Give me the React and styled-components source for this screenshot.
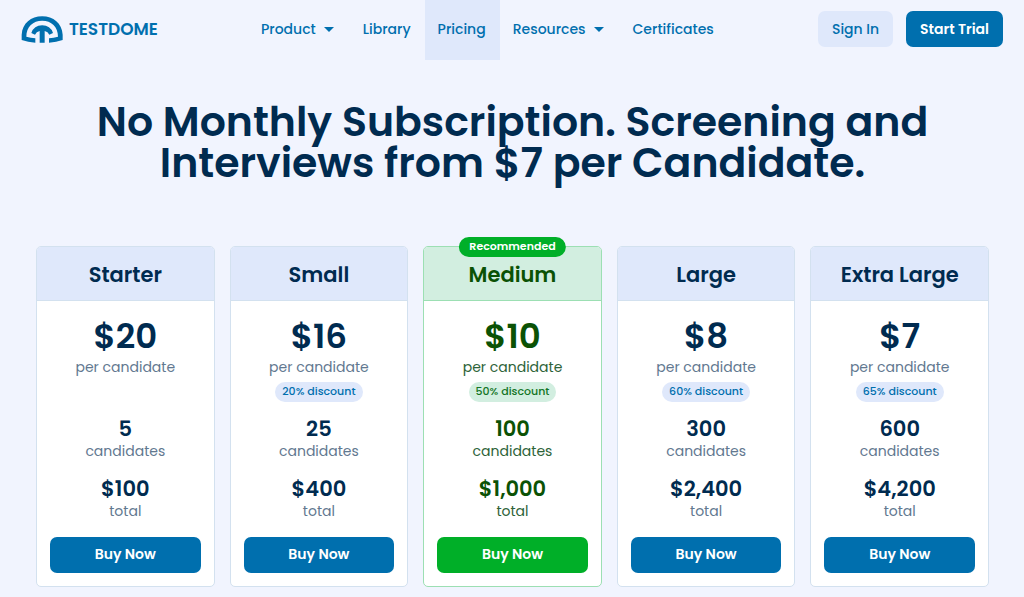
import React from 'react'
import styled, { createGlobalStyle, css } from 'styled-components'

const GlobalStyle = createGlobalStyle`
  * {
    box-sizing: border-box;
  }
  body {
    margin: 0;
    background: #f1f4fe;
    color: #002b50;
    font-family: Poppins, Inter, sans-serif;
    font-size: 14px;
  }
`

const Header = styled.header`
  display: flex;
  align-items: center;
  justify-content: space-between;
  height: 60px;
  padding: 0 21px;
`

const Brand = styled.a`
  display: flex;
  align-items: center;
  gap: 6px;
  padding-bottom: 2px;
  color: #006fae;
  font-size: 17px;
  font-weight: 600;
  text-decoration: none;
`

const Nav = styled.nav`
  display: flex;
`

const NavLink = styled.a`
  display: flex;
  align-items: center;
  gap: 8px;
  height: 60px;
  padding: 0 14px 2px 13px;
  color: #006fae;
  background: ${props => (props.$active ? '#dfe8fb' : 'transparent')};
  font-weight: 500;
  text-decoration: none;
`

const Caret = styled.span`
  margin-right: 2px;
  border: 5px solid transparent;
  border-top-color: currentColor;
  border-bottom: none;
`

const Actions = styled.div`
  display: flex;
  gap: 13px;
  padding-bottom: 2px;
`

const Button = styled.button`
  height: 36px;
  padding: 0 14px;
  border: none;
  border-radius: 7px;
  background: #006fae;
  color: #fff;
  font-family: inherit;
  font-size: 14px;
  font-weight: 600;
  cursor: pointer;
`

const SignIn = styled(Button)`
  background: #dfe8fb;
  color: #006fae;
  font-weight: 500;
`

const BuyButton = styled(Button)`
  width: 100%;
  margin-top: 17px;
  padding-bottom: 2px;
  ${props => props.$featured && css`
    background: #00af28;
  `}
`

const Main = styled.main`
  padding: 41px 35px 10px 36px;
`

const Title = styled.h1`
  max-width: 880px;
  margin: 0 auto 63px;
  font-size: 41px;
  font-weight: 600;
  line-height: 41px;
  text-align: center;
`

const Plans = styled.div`
  display: grid;
  grid-template-columns: repeat(5, 1fr);
  gap: 15px;
`

const Card = styled.article`
  position: relative;
  border: 1px solid ${props => (props.$featured ? '#9cdfb3' : '#d3e1ef')};
  border-radius: 5px;
  background: #fff;
  color: ${props => (props.$featured ? '#0b5205' : '#002b50')};
  text-align: center;
`

const Ribbon = styled.span`
  position: absolute;
  top: -10px;
  left: 50%;
  transform: translateX(-50%);
  padding: 0 10px 2px;
  border-radius: 10px;
  background: #00af28;
  color: #fff;
  font-size: 11px;
  font-weight: 600;
  line-height: 18px;
`

const CardName = styled.h2`
  margin: 0;
  padding-top: 2px;
  border-bottom: 1px solid ${props => (props.$featured ? '#9cdfb3' : '#d3e1ef')};
  border-radius: 4px 4px 0 0;
  background: ${props => (props.$featured ? '#d2eee0' : '#dfe8fb')};
  font-size: 21px;
  font-weight: 600;
  line-height: 51px;
`

const CardBody = styled.div`
  padding: 13px;
`

const Price = styled.div`
  font-size: 34px;
  font-weight: 600;
  line-height: 44px;
`

const Label = styled.div`
  color: ${props => (props.$featured ? '#2d6338' : '#627890')};
  font-size: 14px;
  line-height: 18px;
`

const DiscountRow = styled.div`
  display: flex;
  justify-content: center;
  height: 20px;
  margin: 6px 0 14px;
`

const Discount = styled.span`
  padding: 0 7px 2px;
  border-radius: 10px;
  background: ${props => (props.$featured ? '#d2eee0' : '#dfe8fb')};
  color: ${props => (props.$featured ? '#137525' : '#006fae')};
  font-size: 11px;
  font-weight: 500;
  line-height: 18px;
`

const Amount = styled.div`
  font-size: 21px;
  font-weight: 600;
  line-height: 26px;
`

const Total = styled(Amount)`
  margin-top: 16px;
`

const plans = [
  { name: 'Starter', price: '$20', count: '5', total: '$100' },
  { name: 'Small', price: '$16', discount: '20%', count: '25', total: '$400' },
  { name: 'Medium', price: '$10', discount: '50%', count: '100', total: '$1,000', featured: true },
  { name: 'Large', price: '$8', discount: '60%', count: '300', total: '$2,400' },
  { name: 'Extra Large', price: '$7', discount: '65%', count: '600', total: '$4,200' }
]

const Logo = () => (
  <svg width="42" height="27" viewBox="-2 0 126 81" fill="currentColor" aria-hidden="true">
    <path d="M0 72 V56 C2 22 28 1 61.500 1 S121 22 123 56 V72 Q104 78 82 80 V67 Q96 66 109 62 C109 32 89 14 61.500 14 S14 32 14 62 Q27 66 41 67 V80 Q19 78 0 72 Z" />
    <path d="M54 80 V45 Q44 47 40 56 L29 51 Q37 28 61.500 28 T94 51 L83 56 Q79 47 69 45 V80 Z" />
  </svg>
)

const Plan = ({ plan }) => (
  <Card $featured={plan.featured}>
    {plan.featured && <Ribbon>Recommended</Ribbon>}
    <CardName $featured={plan.featured}>{plan.name}</CardName>
    <CardBody>
      <Price>{plan.price}</Price>
      <Label $featured={plan.featured}>per candidate</Label>
      <DiscountRow>
        {plan.discount && <Discount $featured={plan.featured}>{plan.discount} discount</Discount>}
      </DiscountRow>
      <Amount>{plan.count}</Amount>
      <Label $featured={plan.featured}>candidates</Label>
      <Total>{plan.total}</Total>
      <Label $featured={plan.featured}>total</Label>
      <BuyButton type="button" $featured={plan.featured}>Buy Now</BuyButton>
    </CardBody>
  </Card>
)

const App = () => (
  <>
    <GlobalStyle />
    <Header>
      <Brand href="#home"><Logo />TESTDOME</Brand>
      <Nav>
        <NavLink href="#product">Product<Caret /></NavLink>
        <NavLink href="#library">Library</NavLink>
        <NavLink href="#pricing" $active>Pricing</NavLink>
        <NavLink href="#resources">Resources<Caret /></NavLink>
        <NavLink href="#certificates">Certificates</NavLink>
      </Nav>
      <Actions>
        <SignIn type="button">Sign In</SignIn>
        <Button type="button">Start Trial</Button>
      </Actions>
    </Header>
    <Main>
      <Title>No Monthly Subscription. Screening and Interviews from $7 per Candidate.</Title>
      <Plans>
        {plans.map(plan => <Plan key={plan.name} plan={plan} />)}
      </Plans>
    </Main>
  </>
)

export default App
